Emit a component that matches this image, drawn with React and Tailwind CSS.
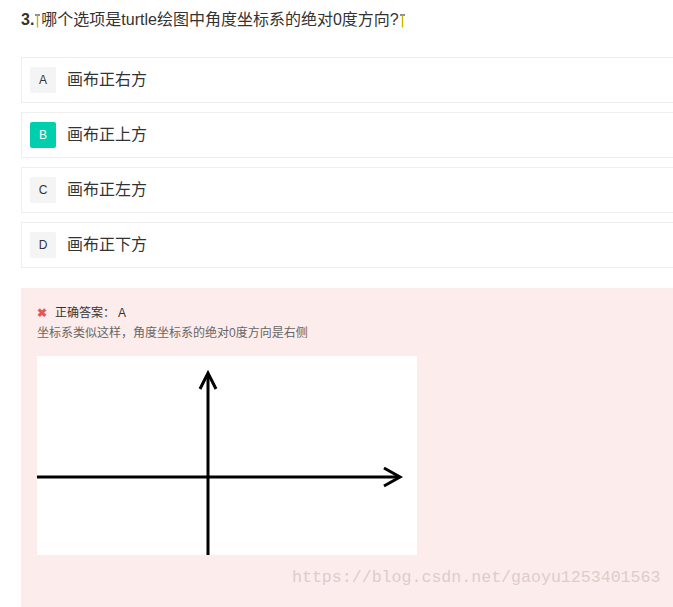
const options = [
    { key: 'A', text: '画布正右方' },
    { key: 'B', text: '画布正上方', picked: true },
    { key: 'C', text: '画布正左方' },
    { key: 'D', text: '画布正下方' },
];

function Marker() {
    return (
        <svg width="7" height="15" viewBox="0 0 7 15" className="inline-block align-[-3px]" aria-hidden>
            <path d="M1 2h5" stroke="#444" strokeWidth="1.2" />
            <path d="M3.5 2v12.5" stroke="#c9b400" strokeWidth="1.4" />
        </svg>
    );
}

function Axes() {
    return (
        <svg width="380" height="199" viewBox="0 0 380 199" className="block bg-white">
            <g stroke="#000" strokeWidth="3" fill="none" strokeLinecap="butt">
                <path d="M0 121H362" />
                <path d="M347 112L363 121L347 130" strokeLinejoin="miter" />
                <path d="M171 199V18" />
                <path d="M163 33L171 17L179 33" strokeLinejoin="miter" />
            </g>
        </svg>
    );
}

export default function App() {
    return (
        <div
            className="h-[607px] w-[673px] overflow-hidden bg-white pl-[21px]"
            style={{ fontFamily: '"Liberation Sans", "Noto Sans CJK SC", sans-serif' }}
        >
            <h1 className="pt-[10px] text-[16px] leading-[20px] text-[#333]">
                <span className="font-bold">3.</span>
                <Marker />
                哪个选项是turtle绘图中角度坐标系的绝对0度方向?
                <Marker />
            </h1>

            <ul className="mt-[27px] flex w-[680px] flex-col gap-[9px]">
                {options.map((opt) => (
                    <li
                        key={opt.key}
                        className="flex h-[46px] items-center gap-[11px] border border-[#eeeeee] pl-[8px]"
                    >
                        <span
                            className={`flex size-[26px] items-center justify-center rounded-[2px] text-[12px] ${opt.picked ? 'bg-[#00cfae] text-white' : 'bg-[#f4f4f4] text-[#333]'}`}
                        >
                            {opt.key}
                        </span>
                        <span className="text-[16px] text-[#333]">{opt.text}</span>
                    </li>
                ))}
            </ul>

            <div className="mt-[20px] flex h-[330px] w-[680px] flex-col bg-[#fdecec] px-[16px] pt-[17px]">
                <p className="flex items-center text-[12px] leading-[16px] text-[#333]">
                    <span className="mr-[8px] text-[12px] font-bold text-[#e05a52]">✖</span>
                    正确答案：<span className="ml-[3px]">A</span>
                </p>
                <p className="mt-[4px] text-[12px] leading-[16px] text-[#666]">
                    坐标系类似这样，角度坐标系的绝对0度方向是右侧
                </p>
                <div className="mt-[15px]">
                    <Axes />
                </div>
                <p
                    className="mt-[13px] pl-[255px] text-[16.6px] leading-[20px] text-[#dccccc]"
                    style={{ fontFamily: '"Liberation Mono", monospace' }}
                >
                    https://blog.csdn.net/gaoyu1253401563
                </p>
            </div>
        </div>
    );
}
